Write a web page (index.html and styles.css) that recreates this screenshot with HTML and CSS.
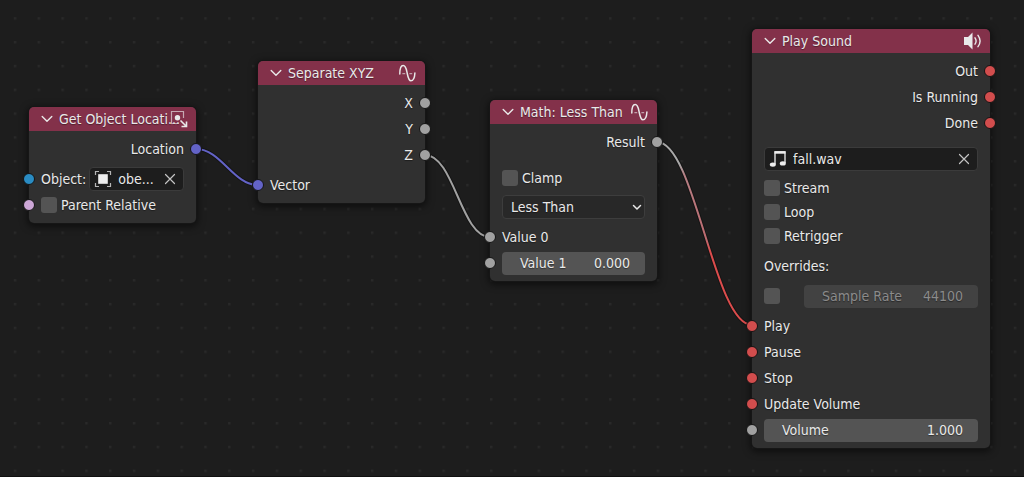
FILE: index.html
```html
<!DOCTYPE html>
<html lang="en">
<head>
<meta charset="utf-8">
<title>Logic Nodes</title>
<link rel="stylesheet" href="styles.css">
</head>
<body>
<svg class="defs" aria-hidden="true">
  <symbol id="chevron" viewBox="0 0 12 8"><path d="M1.200 1.500 6 6.300l4.800-4.800" fill="none" stroke="currentColor" stroke-width="1.400" stroke-linecap="round" stroke-linejoin="round"/></symbol>
  <symbol id="cross" viewBox="0 0 12 12"><path d="M1.500 1.500l9 9M10.500 1.500l-9 9" fill="none" stroke="currentColor" stroke-width="1.200" stroke-linecap="round"/></symbol>
  <symbol id="wave" viewBox="0 0 18 18"><path d="M.8 10C.8 4.500 2.200 1.500 4.200 1.500c2.800 0 3.200 4 4 7.700.8 4 1.400 7.600 3.700 7.600 2.200 0 3.700-2.500 4-7.800" fill="none" stroke="currentColor" stroke-width="1.500" stroke-linecap="round"/><path d="M3.400 9.700h2.800M10.400 9.700h2.800" stroke="currentColor" stroke-width="1.200" opacity=".6"/></symbol>
</svg>
<main class="canvas">
  <svg class="backdrop" aria-hidden="true">
    <defs>
      <pattern id="dots" x="13.800" y="17.200" width="23.810" height="23.810" patternUnits="userSpaceOnUse"><rect width="2.400" height="2.400" fill="#292929"/></pattern>
      <linearGradient id="fade" gradientUnits="userSpaceOnUse" x1="0" y1="142" x2="0" y2="325"><stop offset=".12" stop-color="#a8a8a8"/><stop offset=".18" stop-color="#b57f84"/><stop offset=".53" stop-color="#bd6b70"/><stop offset=".6" stop-color="#dc4c4c"/></linearGradient>
    </defs>
    <rect width="100%" height="100%" fill="url(#dots)"/>
    <g class="links">
      <path class="link-edge" d="M196 149C221 149 233 185 258 185"/>
      <path class="link-edge" d="M425 155C454 155 461 237 490 237"/>
      <path class="link-edge" d="M657 142C695 142 714 325 752 325"/>
      <path stroke="#6363c7" d="M196 149C221 149 233 185 258 185"/>
      <path stroke="#a1a1a1" d="M425 155C454 155 461 237 490 237"/>
      <path stroke="url(#fade)" d="M657 142C695 142 714 325 752 325"/>
    </g>
  </svg>

  <section class="node node-location">
    <header class="head">
      <button class="fold" aria-label="Collapse Get Object Location"><svg class="chevron"><use href="#chevron"/></svg></button>
      <h2 class="title">Get Object Locati...</h2>
      <svg class="head-icon" viewBox="0 0 18 18" aria-hidden="true"><path d="M8.500 13.500h-7v-12h12v6.500" fill="none" stroke="currentColor" stroke-width="1.200" opacity=".65"/><circle cx="7.500" cy="7.700" r="2.700" fill="currentColor"/><path d="M10.500 10.500l5.500 5.500M16.500 11.500v5h-5" fill="none" stroke="currentColor" stroke-width="1.600"/></svg>
    </header>
    <div class="body">
      <div class="row out last"><span>Location</span><i class="socket vector"></i></div>
      <div class="row"><i class="socket object"></i><label class="object-label" for="object">Object:</label>
        <div class="field">
          <svg class="field-icon" viewBox="0 0 18 18" aria-hidden="true"><path d="M1.500 5V1.500H5M13 1.500h3.500V5M16.500 13v3.500H13M5 16.500H1.500V13" fill="none" stroke="#b5b5b5" stroke-width="1.200"/><rect x="4.200" y="4.200" width="9.600" height="9.600" fill="#eee"/></svg>
          <input id="object" type="text" value="obe...">
          <button class="clear" aria-label="Clear object"><svg class="cross"><use href="#cross"/></svg></button>
        </div>
      </div>
      <div class="row"><i class="socket bool"></i><label class="check"><input type="checkbox">Parent Relative</label></div>
    </div>
  </section>

  <section class="node node-separate">
    <header class="head">
      <button class="fold" aria-label="Collapse Separate XYZ"><svg class="chevron"><use href="#chevron"/></svg></button>
      <h2 class="title">Separate XYZ</h2>
      <svg class="head-icon" aria-hidden="true"><use href="#wave"/></svg>
    </header>
    <div class="body">
      <div class="row out"><span>X</span><i class="socket"></i></div>
      <div class="row out"><span>Y</span><i class="socket"></i></div>
      <div class="row out last"><span>Z</span><i class="socket"></i></div>
      <div class="row"><i class="socket vector"></i><span>Vector</span></div>
    </div>
  </section>

  <section class="node node-math">
    <header class="head">
      <button class="fold" aria-label="Collapse Math"><svg class="chevron"><use href="#chevron"/></svg></button>
      <h2 class="title">Math: Less Than</h2>
      <svg class="head-icon" aria-hidden="true"><use href="#wave"/></svg>
    </header>
    <div class="body">
      <div class="row out"><span>Result</span><i class="socket"></i></div>
      <div class="settings">
        <label class="check"><input type="checkbox">Clamp</label>
        <div class="dropdown"><select aria-label="Operation"><option>Less Than</option></select><svg class="arrow" viewBox="0 0 10 7" aria-hidden="true"><path d="M1.500 1.500 5 5l3.500-3.500" fill="none" stroke="currentColor" stroke-width="1.500" stroke-linecap="round" stroke-linejoin="round"/></svg></div>
      </div>
      <div class="row"><i class="socket"></i><span>Value 0</span></div>
      <div class="row"><i class="socket"></i><label class="number">Value 1<input type="text" value="0.000"></label></div>
    </div>
  </section>

  <section class="node node-sound">
    <header class="head">
      <button class="fold" aria-label="Collapse Play Sound"><svg class="chevron"><use href="#chevron"/></svg></button>
      <h2 class="title">Play Sound</h2>
      <svg class="head-icon" viewBox="0 0 18 18" aria-hidden="true"><path d="M0 5h4L8.500.5v17L4 13H0z" fill="currentColor"/><path d="M11 5.800q2.200 3.200 0 6.400M14 3.300q4.200 5.700 0 11.400" fill="none" stroke="currentColor" stroke-width="1.400" stroke-linecap="round"/></svg>
    </header>
    <div class="body">
      <div class="row out"><span>Out</span><i class="socket event"></i></div>
      <div class="row out"><span>Is Running</span><i class="socket event"></i></div>
      <div class="row out"><span>Done</span><i class="socket event"></i></div>
      <div class="settings">
        <div class="field">
          <svg class="field-icon" viewBox="0 0 18 18" aria-hidden="true"><path d="M6 14V2h10v11" fill="none" stroke="#eee" stroke-width="1.300"/><path d="M5.500 1.200h11v2.500h-11z" fill="#eee"/><ellipse cx="3.800" cy="14.600" rx="3" ry="2.200" fill="#eee"/><ellipse cx="13.800" cy="13.400" rx="3" ry="2.200" fill="#eee"/></svg>
          <input type="text" value="fall.wav" aria-label="Sound">
          <button class="clear" aria-label="Clear sound"><svg class="cross"><use href="#cross"/></svg></button>
        </div>
        <div class="checks">
          <label class="check"><input type="checkbox">Stream</label>
          <label class="check"><input type="checkbox">Loop</label>
          <label class="check"><input type="checkbox">Retrigger</label>
        </div>
        <span class="caption">Overrides:</span>
        <div class="override"><input type="checkbox" aria-label="Override sample rate"><label class="number disabled">Sample Rate<input type="text" value="44100" disabled></label></div>
      </div>
      <div class="row"><i class="socket event"></i><span>Play</span></div>
      <div class="row"><i class="socket event"></i><span>Pause</span></div>
      <div class="row"><i class="socket event"></i><span>Stop</span></div>
      <div class="row"><i class="socket event"></i><span>Update Volume</span></div>
      <div class="row"><i class="socket"></i><label class="number">Volume<input type="text" value="1.000"></label></div>
    </div>
  </section>
</main>
</body>
</html>
```
FILE: styles.css
```css
* { box-sizing: border-box; }

body {
  margin: 0;
  background: #1d1d1d;
  color: #e9e9e9;
  font: 14px/16px "DejaVu Sans Condensed", "DejaVu Sans", sans-serif;
}

button, input, select {
  margin: 0;
  padding: 0;
  border: 0;
  background: none;
  color: inherit;
  font: inherit;
  text-shadow: inherit;
  min-width: 0;
}

.defs { position: absolute; width: 0; height: 0; }

.canvas {
  position: relative;
  min-height: 100vh;
  overflow: hidden;
  border-bottom: 1px solid #101010;
}

.backdrop { position: absolute; inset: 0; width: 100%; height: 100%; }
.links { fill: none; stroke-width: 2; }
.link-edge { stroke: #141414; stroke-width: 4; }

/* Nodes */
.node {
  position: absolute;
  width: 167px;
  border-radius: 5px;
  background: #303030;
  box-shadow: 0 0 0 1px #161616, 0 2px 7px 2px rgba(0, 0, 0, .5);
  text-shadow: 0 1px 1px rgba(0, 0, 0, .4);
}
.node-location { left: 29px; top: 107px; }
.node-separate { left: 258px; top: 61px; }
.node-math { left: 490px; top: 100px; }
.node-sound { left: 752px; top: 29px; width: 238px; }

.head {
  display: flex;
  align-items: center;
  height: 24px;
  padding: 0 8px 0 12px;
  border-radius: 5px 5px 0 0;
  background: #83314a;
}
.fold { display: flex; width: 18px; flex: none; }
.chevron { width: 12px; height: 8px; }
.title {
  flex: 1;
  min-width: 0;
  margin: 0;
  font-size: inherit;
  font-weight: 400;
  white-space: nowrap;
}
.head-icon { flex: none; width: 18px; height: 18px; }

.body { padding: 5px 0; }
.row {
  position: relative;
  display: flex;
  align-items: center;
  height: 26px;
  padding: 0 12px;
}
.out { justify-content: flex-end; }
.last { margin-bottom: 4px; }

.socket {
  position: absolute;
  left: -6px;
  top: 7px;
  width: 12px;
  height: 12px;
  border: 1px solid #141414;
  border-radius: 50%;
  background: #a1a1a1;
}
.out .socket { left: auto; right: -6px; }
.socket.vector { background: #6363c7; }
.socket.object { background: #2a8cc3; }
.socket.bool { background: #cca6d6; }
.socket.event { background: #d24d4d; }

/* Controls */
.settings { padding: 11px 12px 5px; }

.check { display: flex; align-items: center; gap: 4px; height: 24px; }
input[type="checkbox"] {
  appearance: none;
  flex: none;
  width: 16px;
  height: 16px;
  border-radius: 3px;
  background: #545454;
}

.field {
  display: flex;
  align-items: center;
  flex: 1;
  min-width: 0;
  height: 24px;
  padding: 0 7px 0 4px;
  border: 1px solid #3b3b3b;
  border-radius: 4px;
  background: #1d1d1d;
}
.field-icon { flex: none; width: 18px; height: 18px; margin-right: 6px; }
.field input { flex: 1; width: 0; }
.clear { display: flex; color: #c4c4c4; }
.cross { width: 12px; height: 12px; }
.object-label { margin-right: 3px; }

.dropdown { display: grid; align-items: center; margin-top: 5px; }
.dropdown select {
  grid-area: 1 / 1;
  appearance: none;
  width: 100%;
  height: 24px;
  padding: 0 8px;
  border: 1px solid #3d3d3d;
  border-radius: 4px;
  background: #282828;
}
.arrow { grid-area: 1 / 1; justify-self: end; width: 10px; height: 7px; margin-right: 3px; pointer-events: none; }

.number {
  display: flex;
  align-items: center;
  flex: 1;
  min-width: 0;
  height: 23px;
  padding: 0 15px 0 18px;
  border-radius: 4px;
  background: #545454;
  white-space: nowrap;
}
.number input { flex: 1; width: 0; text-align: right; }
.disabled { background: #424242; color: #8b8b8b; }

.checks { margin-top: 5px; }
.caption { display: block; margin-top: 6px; line-height: 24px; }
.override { display: flex; align-items: center; gap: 24px; height: 24px; margin-top: 6px; }
```
